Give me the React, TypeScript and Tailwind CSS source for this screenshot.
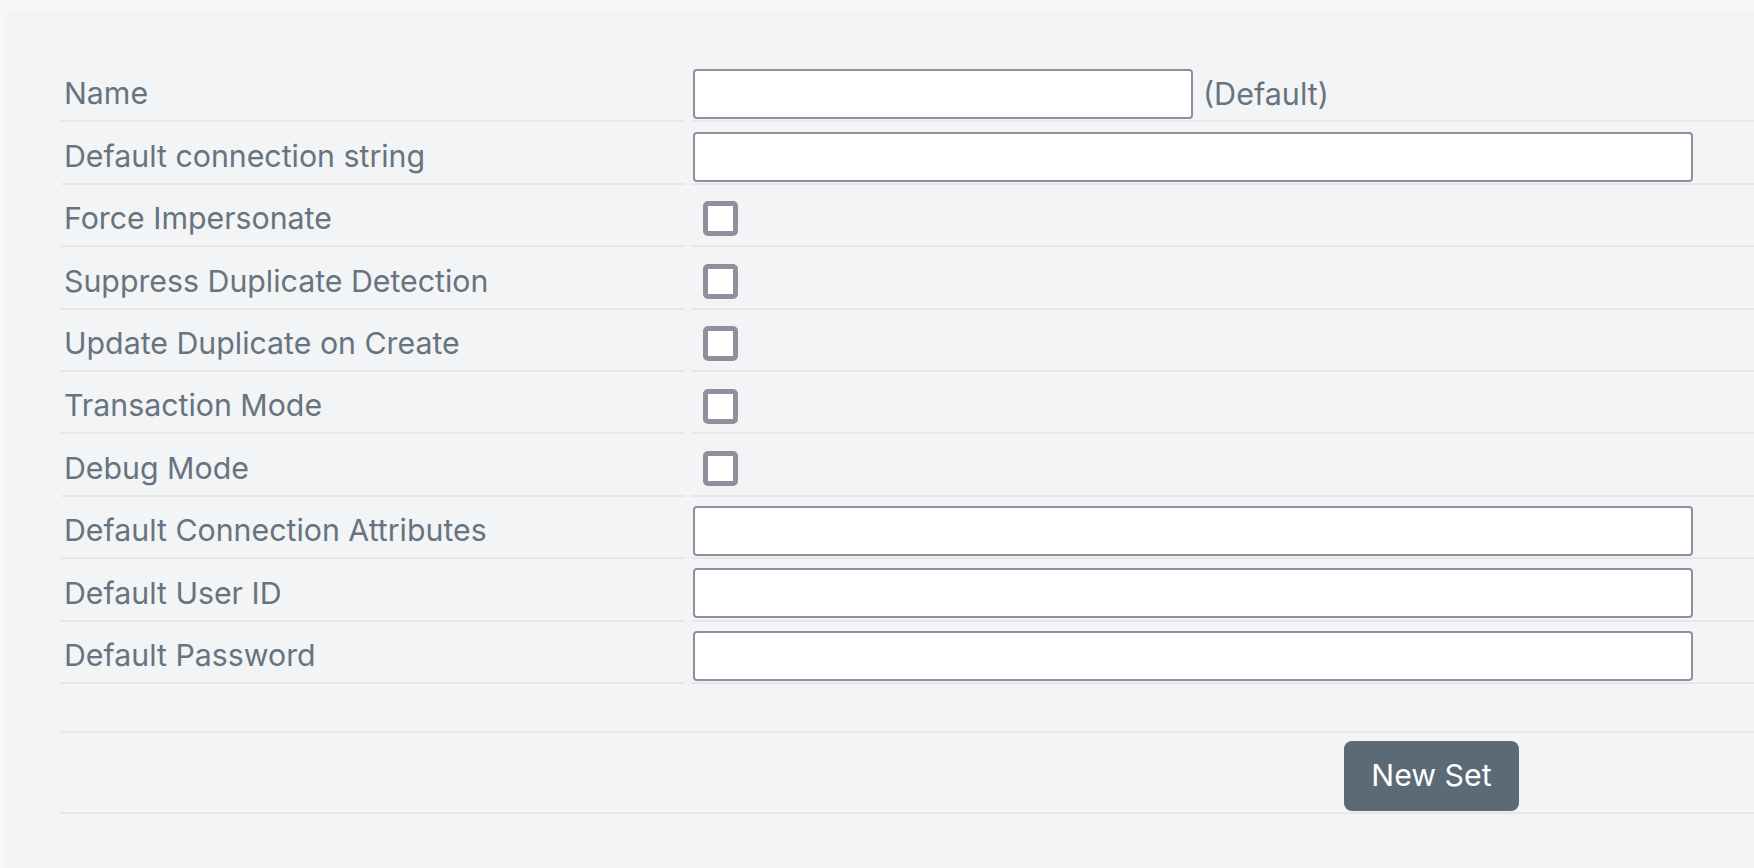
import React from "react";

type Row = { label: string; kind: "name" | "text" | "check" };

const rows: Row[] = [
  { label: "Name", kind: "name" },
  { label: "Default connection string", kind: "text" },
  { label: "Force Impersonate", kind: "check" },
  { label: "Suppress Duplicate Detection", kind: "check" },
  { label: "Update Duplicate on Create", kind: "check" },
  { label: "Transaction Mode", kind: "check" },
  { label: "Debug Mode", kind: "check" },
  { label: "Default Connection Attributes", kind: "text" },
  { label: "Default User ID", kind: "text" },
  { label: "Default Password", kind: "text" },
];

function Field({ kind }: { kind: Row["kind"] }) {
  if (kind === "check") {
    return <div className="ml-[10px] w-[35px] h-[35px] rounded-[5px] border-[5px] border-[#8f8f9d] bg-white" />;
  }
  if (kind === "name") {
    return (
      <div className="flex items-center">
        <div className="w-[500px] h-[50px] rounded-[4px] border-2 border-[#8f8f9d] bg-white" />
        <span className="ml-[10px] text-[30.5px] text-[#67747f]">(Default)</span>
      </div>
    );
  }
  return <div className="w-[1000px] h-[50px] rounded-[4px] border-2 border-[#8f8f9d] bg-white" />;
}

export default function App() {
  return (
    <div className="w-[1754px] h-[868px] overflow-hidden bg-[#f7f7f7] pl-[6px] pt-[10px] font-['Inter',sans-serif]">
      <div className="h-full w-[2300px] rounded-tl-md bg-[#f3f4f6] pl-[55px] pt-[50px]">
        <div className="w-[2111px]">
          {rows.map((row) => (
            <div key={row.label} className="flex gap-[6px] h-[62.4px]">
              <div className="w-[624px] border-b-2 border-[#e6e7ea] flex items-center pl-[3px] pt-[8px] text-[30.3px] text-[#67747f] whitespace-nowrap">
                {row.label}
              </div>
              <div className="flex-1 border-b-2 border-[#e6e7ea] flex items-center pl-[2px] pt-[8px]">
                <Field kind={row.kind} />
              </div>
            </div>
          ))}

          {/* spacer + footer */}
          <div className="h-[49px] border-b-2 border-[#e6e7ea]" />
          <div className="flex border-b-2 border-[#e6e7ea] pt-[8px] pb-[1px]">
            <div className="w-[630px]" />
            <div className="flex-1 flex justify-center">
              <button className="w-[175px] h-[70px] rounded-[8px] bg-[#5b6a75] text-white text-[30.3px]">
                New Set
              </button>
            </div>
          </div>
        </div>
      </div>
    </div>
  );
}
